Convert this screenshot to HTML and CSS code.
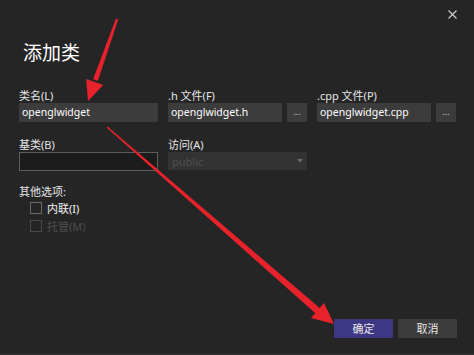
FILE: index.html
```html
<!DOCTYPE html>
<html lang="zh-CN">
<head>
    <meta charset="UTF-8">
    <title>添加类</title>
    <link rel="stylesheet" href="styles.css">
</head>
<body>
    <div class="dialog">
        <div class="topbar">
            <span class="close-button">
                <svg width="9" height="9" viewBox="0 0 9 9"><path d="M0.5 0.5 L8.5 8.5 M8.5 0.5 L0.5 8.5" stroke="#cfcfcf" stroke-width="1.1"/></svg>
            </span>
        </div>
        <h1 class="title">添加类</h1>

        <div class="field-grid">
            <div class="field">
                <label>类名(L)</label>
                <div class="field-row">
                    <div class="text-box">openglwidget</div>
                </div>
            </div>
            <div class="field">
                <label>.h 文件(F)</label>
                <div class="field-row">
                    <div class="text-box">openglwidget.h</div>
                    <div class="browse-button">...</div>
                </div>
            </div>
            <div class="field">
                <label>.cpp 文件(P)</label>
                <div class="field-row">
                    <div class="text-box">openglwidget.cpp</div>
                    <div class="browse-button">...</div>
                </div>
            </div>
        </div>

        <div class="field-grid second">
            <div class="field">
                <label>基类(B)</label>
                <div class="field-row">
                    <div class="text-box empty"></div>
                </div>
            </div>
            <div class="field">
                <label>访问(A)</label>
                <div class="field-row">
                    <div class="select-box">
                        <span>public</span>
                        <svg width="6" height="4" viewBox="0 0 6 4"><path d="M0 0 L6 0 L3 3.5 Z" fill="#6b6b6b"/></svg>
                    </div>
                </div>
            </div>
        </div>

        <div class="options">
            <div class="options-title">其他选项:</div>
            <div class="check-item">
                <span class="check-box"></span>
                <span>内联(I)</span>
            </div>
            <div class="check-item disabled">
                <span class="check-box"></span>
                <span>托管(M)</span>
            </div>
        </div>

        <div class="actions">
            <div class="action-button primary">确定</div>
            <div class="action-button">取消</div>
        </div>
    </div>

    <!-- red annotation arrows drawn over the dialog -->
    <svg class="annotations" width="474" height="355" viewBox="0 0 474 355">
        <polygon points="116,18.6 118.2,19.4 97.9,80.8 93.1,79.2" fill="#e8222b"/>
        <polygon points="88,101 86.2,79.1 103.2,85.1" fill="#e8222b"/>
        <polygon points="106.5,127.6 107.5,126.4 320.3,308.4 315.7,313.6" fill="#e8222b"/>
        <polygon points="334,324 311,318 324,303" fill="#e8222b"/>
    </svg>
</body>
</html>
```

FILE: styles.css
```css
:root {
    --bg-color: #252526;
    --field-color: #3c3c3c;
    --text-color: #f0f0f0;
    --muted-color: #5a5a5a;
    --accent-color: #3e3884;
}
body {
    margin: 0;
    width: 474px;
    height: 355px;
    overflow: hidden;
    background-color: var(--bg-color);
    color: var(--text-color);
    font-family: "Noto Sans", "Noto Sans CJK SC", sans-serif;
    font-size: 11px;
}
.dialog {
    box-sizing: border-box;
    height: 355px;
    display: flex;
    flex-direction: column;
    padding: 0 17px 0 19px;
    border-bottom: 2px solid #2e2e2e;
}
.topbar {
    height: 19px;
    display: flex;
    justify-content: flex-end;
    align-items: flex-end;
}
.close-button {
    display: flex;
    height: 9px;
}
.title {
    margin: 20px 0 0 4px;
    font-family: "Noto Sans CJK SC", sans-serif;
    font-size: 19px;
    font-weight: normal;
    line-height: 26px;
    color: #ffffff;
}
/* Fields */
.field-grid {
    display: grid;
    grid-template-columns: 139px 139px 139px;
    column-gap: 10px;
    margin-top: 23px;
}
.field-grid.second {
    margin-top: 15px;
}
.field label {
    display: block;
    height: 15px;
    line-height: 15px;
    color: #e6e6e6;
}
.field-row {
    display: flex;
    gap: 5px;
}
.text-box {
    flex: 1;
    box-sizing: border-box;
    height: 19px;
    line-height: 19px;
    padding: 0 3px;
    background-color: var(--field-color);
    font-size: 10.5px;
    color: #ffffff;
    white-space: nowrap;
    overflow: hidden;
}
.text-box.empty {
    background-color: #1c1c1c;
    border: 1px solid #5e5e5e;
}
.browse-button {
    width: 20px;
    height: 19px;
    line-height: 17px;
    text-align: center;
    background-color: var(--field-color);
    color: #cfcfcf;
    font-size: 9px;
}
.select-box {
    flex: 1;
    box-sizing: border-box;
    height: 18px;
    display: flex;
    align-items: center;
    justify-content: space-between;
    padding: 0 4px;
    background-color: #333333;
    color: #4e4e4e;
}
/* Options */
.options {
    margin-top: 13px;
}
.options-title {
    height: 15px;
    line-height: 15px;
    color: #e6e6e6;
}
.check-item {
    display: flex;
    align-items: center;
    gap: 5px;
    margin: 2px 0 0 11px;
    height: 13px;
    color: #f2f2f2;
}
.check-item + .check-item {
    margin-top: 5px;
}
.check-item.disabled {
    color: #4e4e4e;
}
.check-box {
    box-sizing: border-box;
    width: 12px;
    height: 12px;
    border: 1px solid #6a6a6a;
    background-color: #242424;
}
.check-item.disabled .check-box {
    border-color: #4a4a4a;
}
/* Buttons */
.actions {
    margin-top: auto;
    margin-bottom: 15px;
    display: flex;
    justify-content: flex-end;
    gap: 5px;
}
.action-button {
    width: 59px;
    height: 19px;
    line-height: 19px;
    text-align: center;
    background-color: var(--field-color);
    color: #e8e8e8;
    font-family: "Noto Sans CJK SC", sans-serif;
    font-size: 11px;
}
.action-button.primary {
    background-color: var(--accent-color);
}
.annotations {
    position: absolute;
    left: 0;
    top: 0;
    pointer-events: none;
}
```
